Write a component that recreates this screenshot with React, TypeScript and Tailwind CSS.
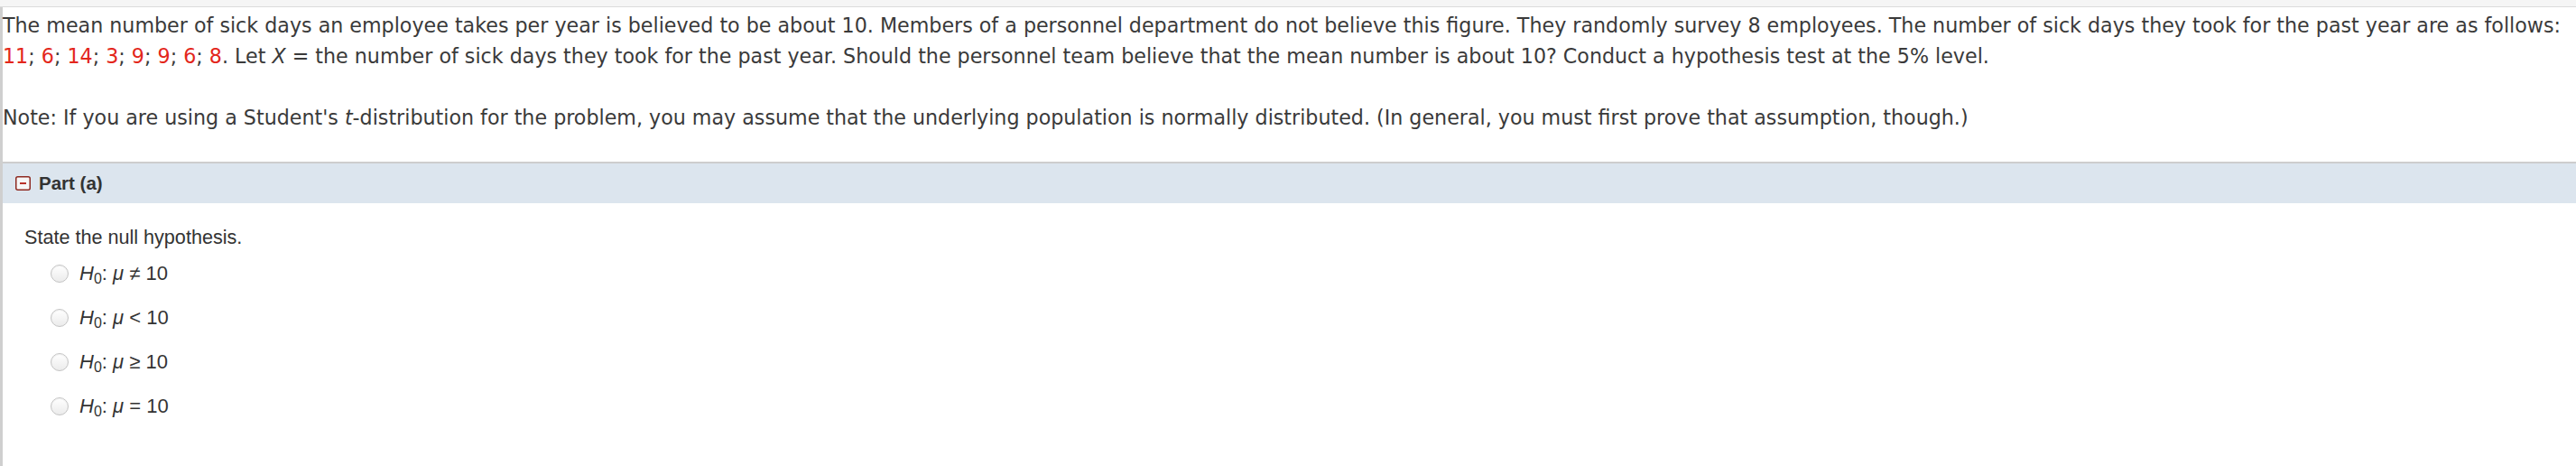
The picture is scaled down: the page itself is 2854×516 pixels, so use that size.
import React from 'react'

const OPTIONS = ['≠', '<', '≥', '=']

function Radio() {
  return (
    <span className="inline-block h-[20px] w-[20px] shrink-0 rounded-full border border-[#c4c4c4] bg-[linear-gradient(to_bottom,#ffffff,#ebebeb)] shadow-[inset_0_1px_1px_rgba(0,0,0,0.06)]" />
  )
}

function MinusBox() {
  return (
    <svg width="17" height="16" viewBox="0 0 17 16" className="shrink-0">
      <rect x="0.75" y="0.75" width="15.5" height="14.5" rx="2" fill="#f7f7f7" stroke="#8e2a22" strokeWidth="1.5" />
      <rect x="5" y="7" width="7" height="2" fill="#b8322a" />
    </svg>
  )
}

export default function App() {
  const red = 'text-[#e3261b]'
  const nums = ['11', '6', '14', '3', '9', '9', '6', '8']

  return (
    <div className="min-h-[516px] w-full bg-white text-[#333]">
      <div className="h-[8px] border-b border-[#dcdcdc] bg-[#f5f5f5]" />
      <div className="min-h-[508px] border-l-[3px] border-[#cfcfcf]">
        <div className="whitespace-nowrap pb-[32px] pl-0 pt-[3px] font-['DejaVu_Sans',sans-serif] text-[22.2px] leading-[34px] text-[#3a3a3a]">
          The mean number of sick days an employee takes per year is believed to be about 10. Members of a personnel department do not believe this figure. They randomly survey 8 employees. The number of sick days they took for the past year are as follows:
          <br />
          {nums.map((n, i) => (
            <React.Fragment key={i}>
              <span className={red}>{n}</span>
              {i < nums.length - 1 ? '; ' : ''}
            </React.Fragment>
          ))}
          . Let <i>X</i> = the number of sick days they took for the past year. Should the personnel team believe that the mean number is about 10? Conduct a hypothesis test at the 5% level.
          <br />
          <br />
          Note: If you are using a Student's <i>t</i>-distribution for the problem, you may assume that the underlying population is normally distributed. (In general, you must first prove that assumption, though.)
        </div>

        <div className="flex h-[46px] items-center gap-[9px] border-t-2 border-[#cdcdcd] bg-[#dce5ee] pl-[14px] font-['Liberation_Sans',Arial,sans-serif] text-[20.5px] font-bold text-[#333]">
          <MinusBox />
          <span>Part (a)</span>
        </div>

        <div className="pl-[24px] pt-[26px] font-['Liberation_Sans',Arial,sans-serif] text-[21.6px] leading-[24px] text-[#333]">
          <div>State the null hypothesis.</div>
          <div className="mt-[3px] flex flex-col">
            {OPTIONS.map((op) => (
              <div key={op} className="flex h-[49px] items-center gap-[12px] pl-[29px] text-[22px]">
                <Radio />
                <span className="whitespace-nowrap">
                  <i>H</i>
                  <sub className="text-[16px]">0</sub>: <i>μ</i>&nbsp;{op}&nbsp;10
                </span>
              </div>
            ))}
          </div>
        </div>
      </div>
    </div>
  )
}
